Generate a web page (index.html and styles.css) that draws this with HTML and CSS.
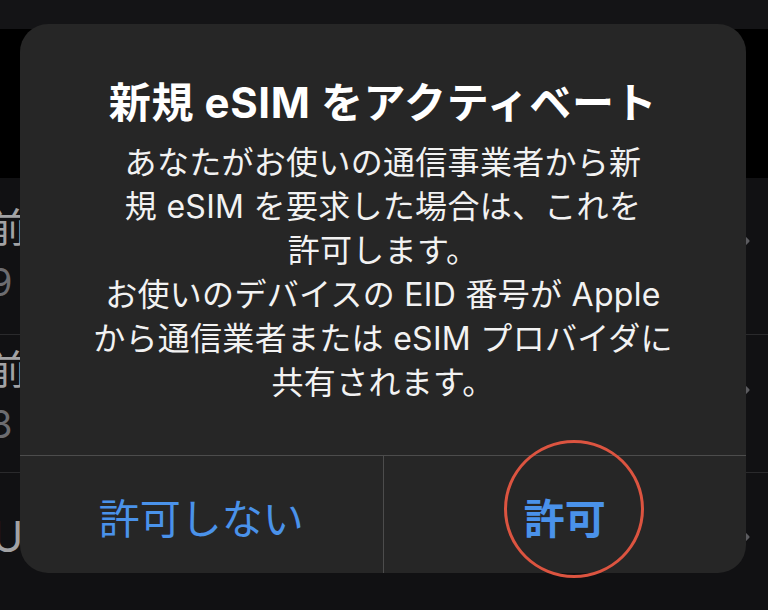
FILE: index.html
```html
<!DOCTYPE html>
<html lang="ja">
<head>
<meta charset="utf-8">
<title>新規 eSIM をアクティベート</title>
<link rel="stylesheet" href="styles.css">
</head>
<body>
<div class="screen">
  <div class="navbar"></div>
  <div class="spacer"></div>
  <ul class="list">
    <li class="row row-first">
      <div class="row-text">
        <div class="row-title">前</div>
        <div class="row-sub">9</div>
      </div>
      <svg class="chev" width="14" height="22" viewBox="0 0 14 22"><path d="M2 2 L11 11 L2 20" fill="none" stroke="#5c5c60" stroke-width="3" stroke-linecap="round" stroke-linejoin="round"/></svg>
    </li>
    <li class="row row-middle">
      <div class="row-text">
        <div class="row-title">前</div>
        <div class="row-sub">3</div>
      </div>
      <svg class="chev" width="14" height="22" viewBox="0 0 14 22"><path d="M2 2 L11 11 L2 20" fill="none" stroke="#5c5c60" stroke-width="3" stroke-linecap="round" stroke-linejoin="round"/></svg>
    </li>
    <li class="row row-last">
      <div class="row-text">
        <div class="row-title row-title-latin">U</div>
      </div>
      <svg class="chev" width="14" height="22" viewBox="0 0 14 22"><path d="M2 2 L11 11 L2 20" fill="none" stroke="#5c5c60" stroke-width="3" stroke-linecap="round" stroke-linejoin="round"/></svg>
    </li>
  </ul>

  <div class="alert" role="alertdialog">
    <div class="alert-content">
      <h1 class="alert-title">新規 eSIM をアクティベート</h1>
      <p class="alert-msg">あなたがお使いの通信事業者から新<br>規 eSIM を要求した場合は、これを<br>許可します。<br>お使いのデバイスの EID 番号が Apple<br>から通信業者または eSIM プロバイダに<br>共有されます。</p>
    </div>
    <div class="alert-actions">
      <div class="btn">許可しない</div>
      <div class="btn btn-primary">許可<span class="highlight"></span></div>
    </div>
  </div>
</div>
</body>
</html>
```

FILE: styles.css
```css
html, body {
  margin: 0;
  padding: 0;
  background: #000;
}

body {
  width: 768px;
  height: 610px;
  overflow: hidden;
  font-family: Inter, "Noto Sans CJK JP", sans-serif;
}

.screen {
  position: relative;
  width: 768px;
  height: 610px;
  overflow: hidden;
  background: #000;
}

.navbar {
  height: 29px;
  background: #141416;
}

.spacer {
  height: 149px;
}

.list {
  list-style: none;
  margin: 0;
  padding: 0;
  background: #111113;
}

.row {
  display: flex;
  justify-content: space-between;
  align-items: flex-start;
  height: 138px;
  padding-top: 13px;
  box-sizing: border-box;
  border-bottom: 1px solid #2a2a2c;
}

.row-first {
  height: 157px;
  padding-top: 28px;
}

.row-last {
  height: 140px;
  padding-top: 42px;
  border-bottom: none;
}

.row-text {
  margin-left: -13px;
}

.row-title {
  font-size: 40px;
  line-height: 44px;
  color: #a2a2a4;
}

.row-title-latin {
  margin-left: 5px;
  font-size: 42px;
}

.row-sub {
  margin-top: 10px;
  margin-left: 2px;
  font-size: 38px;
  line-height: 44px;
  color: #6c6c70;
}

.chev {
  margin-top: 24px;
  margin-right: 17px;
}

.row-middle .chev {
  margin-top: 31px;
}

.row-last .chev {
  margin-top: 11px;
}

.alert {
  position: absolute;
  left: 20px;
  top: 24px;
  width: 726px;
  height: 549px;
  background: #262626;
  border-radius: 28px;
  display: flex;
  flex-direction: column;
}

.alert-content {
  flex: 1;
  padding: 55px 16px 0;
  text-align: center;
}

.alert-title {
  margin: 0;
  font-size: 42px;
  line-height: 48px;
  font-weight: 700;
  color: #ffffff;
  letter-spacing: 0.6px;
}

.alert-msg {
  margin: 14px 0 0;
  font-size: 32px;
  line-height: 44px;
  font-weight: 400;
  color: #f2f2f2;
  letter-spacing: 0.3px;
}

.alert-actions {
  display: flex;
  height: 117px;
  border-top: 1px solid #4c4c4c;
}

.btn {
  flex: 1;
  display: flex;
  align-items: center;
  justify-content: center;
  padding-top: 3px;
  font-size: 41px;
  color: #4a92ea;
}

.btn + .btn {
  border-left: 1px solid #4c4c4c;
}

.btn-primary {
  position: relative;
  font-weight: 700;
}

.highlight {
  position: absolute;
  left: 120px;
  top: -16px;
  width: 134px;
  height: 132px;
  border: 3px solid #dc5440;
  border-radius: 50%;
}
```
